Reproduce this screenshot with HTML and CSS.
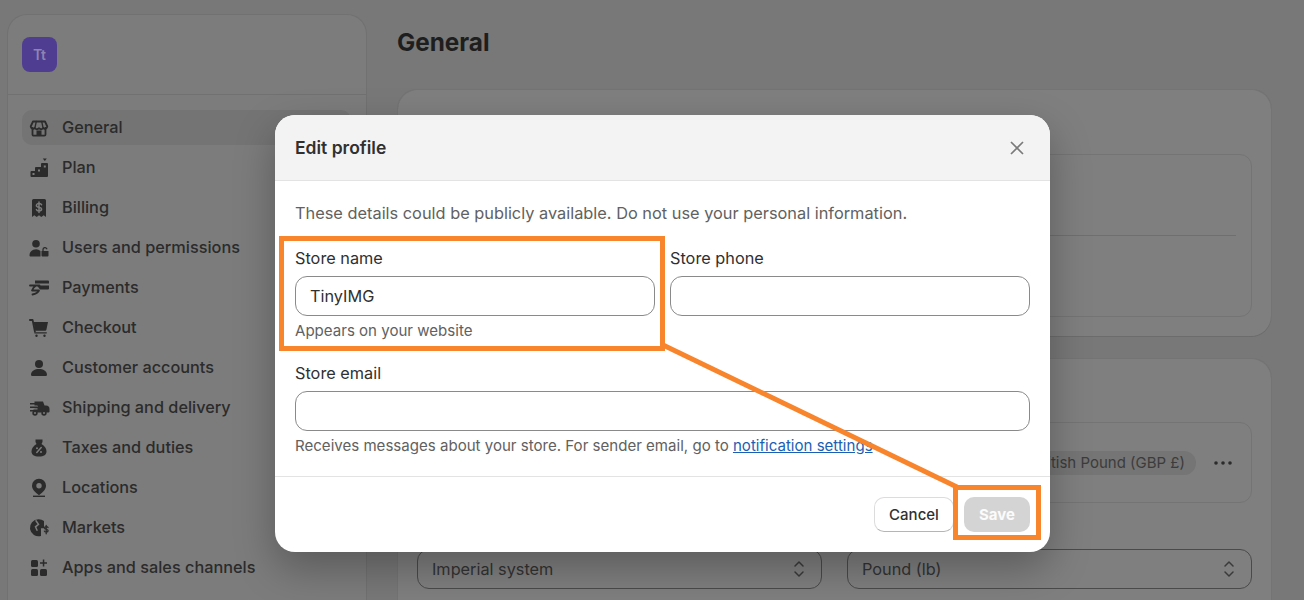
FILE: index.html
```html
<!DOCTYPE html>
<html lang="en">
<head>
<meta charset="utf-8">
<title>General</title>
<link rel="stylesheet" href="styles.css">
</head>
<body>
<div class="page">
  <aside class="sidebar">
    <div class="side-head"><div class="avatar">Tt</div></div>
    <nav class="nav">
      <a class="nav-item active"><svg class="ico" viewBox="0 0 20 20"><path class="ln" d="M3 4.500h12l2.300 5a2.400 2.400 0 0 1-4.100 1.500 3 3 0 0 1-4.200.3 3 3 0 0 1-4.200-.3A2.400 2.400 0 0 1 .7 9.500z"/><path class="ln" d="M2.500 11v6.500a1.200 1.200 0 0 0 1.200 1.200h10.600a1.200 1.200 0 0 0 1.200-1.200V11"/><path d="M6.500 13.500h5v5.200h-5z"/><path class="ln thin" d="M6.300 4.500 5 10.500M11.700 4.500l1.300 6"/></svg>General</a>
      <a class="nav-item"><svg class="ico" viewBox="0 0 20 20"><path d="M.5 15a1 1 0 0 1 1-1H5v-3a1 1 0 0 1 1-1h5V7a1 1 0 0 1 1-1h5a1 1 0 0 1 1 1v12a1 1 0 0 1-1 1H1.500a1 1 0 0 1-1-1z"/><path class="hole" d="M2.500 16h2v2h-2zM8 12.500h2v2H8zM13.800 8.500h2v2h-2z"/><path d="M12.800 1.500h4L14.800 4z"/></svg>Plan</a>
      <a class="nav-item"><svg class="ico" viewBox="0 0 20 20"><path d="M2 3.500A1.500 1.500 0 0 1 3.500 2h11A1.500 1.500 0 0 1 16 3.500V20l-2.300-1.800-2.400 1.800L9 18.200 6.700 20l-2.400-1.800L2 20z"/><path class="cut" d="M11.600 7.800C11.300 7 10.200 6.500 9 6.500c-1.400 0-2.600.7-2.600 1.900 0 2.600 5.200 1.200 5.200 3.700 0 1.200-1.200 1.900-2.600 1.900-1.200 0-2.300-.5-2.600-1.400M9 5v10.500"/></svg>Billing</a>
      <a class="nav-item"><svg class="ico" viewBox="0 0 20 20"><g transform="translate(-1 1.500)"><circle cx="7" cy="5.300" r="3.800"/><path d="M.5 17a6.500 6 0 0 1 11-4.500V18H1.500a1 1 0 0 1-1-1z"/><path d="M12.500 12.500h7V17a1 1 0 0 1-1 1h-5a1 1 0 0 1-1-1z"/><path class="ln thin" d="M14 12.500v-1.500a2 2 0 0 1 3.800-.8"/></g></svg>Users and permissions</a>
      <a class="nav-item"><svg class="ico" viewBox="0 0 20 20"><path d="M5 3.500h13a1 1 0 0 1 1 1v2H5zM7 8.500h12v3a1 1 0 0 1-1 1h-8z"/><path class="ln" d="M0 8.500h9.500M6 8.500C3.500 10 2.500 12 2 13.500h7C8 15.500 5 17 2.500 17.500"/></svg>Payments</a>
      <a class="nav-item"><svg class="ico" viewBox="0 0 20 20"><g transform="translate(-1 1)"><path class="ln" d="M.9 2h2.700l2.300 11.500"/><path d="M4.500 4h14.500l-1.600 7.800a1.300 1.300 0 0 1-1.300 1H6.300z"/><path class="ln thin" d="M5.800 14.800h11.500"/><circle cx="7.500" cy="17.800" r="1.200"/><circle cx="15.500" cy="17.800" r="1.200"/></g></svg>Checkout</a>
      <a class="nav-item"><svg class="ico" viewBox="0 0 20 20"><g transform="translate(-1 1.500)"><circle cx="10" cy="5.500" r="4"/><path d="M2 16.300C2 12.500 6 10.500 10 10.500s8 2 8 5.800a1.200 1.200 0 0 1-1.200 1.200H3.200A1.200 1.200 0 0 1 2 16.300z"/></g></svg>Customer accounts</a>
      <a class="nav-item"><svg class="ico" viewBox="0 0 20 20"><g transform="translate(-.5 1)"><path d="M5 3.500h8.500l1.500 4h1.500a3.500 3.500 0 0 1 3.500 3.500v2.500a1 1 0 0 1-1 1H4v-3h4v-1.300H5V9h3V7.500H5z"/><path d="M.5 5h7v1.500h-7zM.5 8.500h7V10h-7zM.5 12h7v1.500h-7z"/><circle cx="5.500" cy="15" r="2.700"/><circle cx="14.500" cy="15" r="2.700"/><circle class="hole" cx="5.500" cy="15" r="1"/><circle class="hole" cx="14.500" cy="15" r="1"/></g></svg>Shipping and delivery</a>
      <a class="nav-item"><svg class="ico" viewBox="0 0 20 20"><g transform="translate(-1 1.500)"><path d="M6.500 1h7v2.500l-1 2c3 1.500 5 4.500 5 7.500 0 3-2.500 5-7.500 5s-7.500-2-7.500-5c0-3 2-6 5-7.500l-1-2z"/><path class="cut" d="M7.800 14 12.200 9"/><circle class="hole" cx="8" cy="9.800" r="1"/><circle class="hole" cx="12" cy="13.500" r="1"/></g></svg>Taxes and duties</a>
      <a class="nav-item"><svg class="ico" viewBox="0 0 20 20"><g transform="translate(-1 .8)"><path fill-rule="evenodd" d="M10 1a7 7 0 0 1 7 7c0 3.500-3 6.500-7 9.500C6 14.500 3 11.500 3 8a7 7 0 0 1 7-7zm0 4.300a2.700 2.700 0 1 0 0 5.400 2.700 2.700 0 0 0 0-5.400z"/><path d="M4 17.800h12v1.400H4z"/></g></svg>Locations</a>
      <a class="nav-item"><svg class="ico" viewBox="0 0 20 20"><g transform="translate(-1 1.300)"><path d="M9.500 1a8.500 8.500 0 1 0 2.500 16.600V10H15V2.800A8.500 8.500 0 0 0 9.500 1z"/><path class="cut" d="M7 2.500 9.500 6 6.500 8.500 8 12"/><path class="ln thin" d="M19 9.300c-.3-.8-1-1-1.800-1-1 0-1.700.5-1.700 1.400 0 1.900 3.600.8 3.600 2.700 0 .9-.8 1.400-1.900 1.400-.8 0-1.600-.3-1.800-1M17.200 7v8.500"/></g></svg>Markets</a>
      <a class="nav-item"><svg class="ico" viewBox="0 0 20 20"><g transform="translate(-1 1)"><rect x="2" y="2" width="7" height="7" rx="1.500"/><rect x="2" y="11" width="7" height="7" rx="1.500"/><rect x="11" y="11" width="7" height="7" rx="1.500"/><path d="M13.800 1.500h1.500v2.700H18v1.500h-2.700v2.700h-1.500V5.700H11V4.200h2.800z"/></g></svg>Apps and sales channels</a>
    </nav>
  </aside>

  <main class="main">
    <h1 class="title">General</h1>
    <section class="card">
      <div class="box tall"><div class="rule"></div></div>
    </section>
    <section class="card second">
      <div class="box row">
        <span class="pill">British Pound (GBP £)</span>
        <svg class="dots" viewBox="0 0 18 4"><circle cx="2" cy="2" r="1.800"/><circle cx="9" cy="2" r="1.800"/><circle cx="16" cy="2" r="1.800"/></svg>
      </div>
      <div class="selects">
        <div class="select">Imperial system<svg class="updown" viewBox="0 0 12 20"><path d="M2 7l4-4 4 4M2 13l4 4 4-4"/></svg></div>
        <div class="select">Pound (lb)<svg class="updown" viewBox="0 0 12 20"><path d="M2 7l4-4 4 4M2 13l4 4 4-4"/></svg></div>
      </div>
    </section>
  </main>
</div>

<div class="modal">
  <header class="modal-head">
    <h2 class="modal-title">Edit profile</h2>
    <svg class="close" viewBox="0 0 16 16"><path d="M2 2l12 12M14 2 2 14"/></svg>
  </header>
  <div class="modal-body">
    <p class="intro">These details could be publicly available. Do not use your personal information.</p>
    <div class="fields">
      <div class="field">
        <label class="label">Store name</label>
        <div class="input">TinyIMG</div>
        <p class="help">Appears on your website</p>
      </div>
      <div class="field">
        <label class="label">Store phone</label>
        <div class="input"></div>
      </div>
      <div class="field wide">
        <label class="label">Store email</label>
        <div class="input"></div>
        <p class="help">Receives messages about your store. For sender email, go to <a class="link">notification settings</a></p>
      </div>
    </div>
  </div>
  <footer class="modal-foot">
    <button class="btn">Cancel</button>
    <button class="btn save">Save</button>
  </footer>
</div>

<svg class="annot" viewBox="0 0 1304 600">
  <rect x="281.500" y="238.500" width="381" height="110"/>
  <rect x="955.500" y="487.500" width="83" height="50"/>
  <path d="M663 345 957 487"/>
</svg>
</body>
</html>
```

FILE: styles.css
```css
* { box-sizing: border-box; }
html, body { margin: 0; height: 600px; overflow: hidden; }
body {
  background: #787878;
  font-family: Inter, "Liberation Sans", sans-serif;
  font-size: 16.300px;
  color: #2b2b2b;
  position: relative;
}
.page { display: flex; height: 600px; padding: 14px 0 0 7px; }

.sidebar {
  width: 360px;
  flex: none;
  height: 586px;
  background: #7c7c7c;
  border: 1px solid #717171;
  border-bottom: 0;
  border-radius: 20px 20px 0 0;
}
.side-head { height: 80px; padding: 22px 14px; border-bottom: 1px solid #717171; }
.avatar {
  width: 35px; height: 35px;
  border-radius: 8px;
  background: #4f3d92;
  color: #8d84b0;
  font-size: 14px;
  font-weight: 600;
  display: flex; align-items: center; justify-content: center;
}
.nav { padding: 15px 15px 0 14px; display: flex; flex-direction: column; gap: 5px; }
.nav-item {
  height: 35px;
  display: flex; align-items: center;
  padding: 0 0 1px 8px;
  gap: 12px;
  line-height: 20px;
  border-radius: 10px;
  font-weight: 500;
  white-space: nowrap;
}
.nav-item.active { background: #747474; }
.ico { width: 20px; height: 20px; flex: none; fill: #2b2b2b; overflow: visible; }
.ln { fill: none; stroke: #2b2b2b; stroke-width: 1.800; stroke-linejoin: round; stroke-linecap: round; }
.ln.thin { stroke-width: 1.300; }
.cut { fill: none; stroke: #7c7c7c; stroke-width: 1.500; stroke-linecap: round; }
.hole { fill: #7c7c7c; }

.main { flex: 1; padding-left: 31px; padding-right: 33px; }
.title { margin: 0 0 0 -1px; height: 56px; padding-top: 12px; font-size: 24.300px; line-height: 32px; font-weight: 700; color: #1e1e1e; }
.card {
  margin-top: 19px;
  background: #7f7f7f;
  border-radius: 20px;
  border-top: 1px solid #747474;
  box-shadow: 0 1px 0 #6c6c6c, 1px 0 0 #747474, -1px 0 0 #747474;
  padding: 64px 19px 19px;
}
.card.second { margin-top: 22px; height: 242px; padding: 63px 19px 0; border-radius: 20px 20px 0 0; }
.box { border: 1px solid #747474; border-radius: 12px; }
.box.tall { height: 163px; padding-top: 80px; }
.rule { height: 1px; background: #6f6f6f; margin-right: 15px; }
.box.row { height: 81px; display: flex; align-items: center; justify-content: flex-end; padding-right: 19px; }
.pill {
  height: 24px; line-height: 24px;
  padding: 0 11px;
  border-radius: 12px;
  background: #757575;
  font-size: 15px;
  color: #3c3c3c;
  margin-right: 18px;
}
.dots { width: 18px; height: 4px; fill: #2b2b2b; }
.selects { margin-top: 46px; display: flex; gap: 25px; }
.select {
  width: 405px; height: 40px;
  border: 1px solid #4a4a4a;
  border-radius: 12px;
  padding: 0 14px;
  display: flex; align-items: center; justify-content: space-between;
  color: #333;
}
.updown { width: 12px; height: 20px; fill: none; stroke: #3a3a3a; stroke-width: 1.500; stroke-linecap: round; stroke-linejoin: round; margin-right: 2px; }

.modal {
  position: absolute;
  left: 275px; top: 115px;
  width: 775px; height: 437px;
  background: #fff;
  border-radius: 20px;
  overflow: hidden;
  box-shadow: 0 16px 40px rgba(0, 0, 0, .28);
  color: #303030;
}
.modal-head {
  height: 66px;
  background: #f3f3f3;
  border-bottom: 1px solid #e3e3e3;
  padding: 0 25px 0 20px;
  display: flex; align-items: center; justify-content: space-between;
}
.modal-title { margin: 0; font-size: 17.500px; font-weight: 600; }
.close { width: 16px; height: 16px; fill: none; stroke: #7a7a7a; stroke-width: 1.700; }
.modal-body { height: 296px; padding: 22px 20px 0; border-bottom: 1px solid #e3e3e3; }
.intro { margin: 0; font-size: 16.350px; line-height: 20px; color: #616161; }
.fields { margin-top: 25px; display: grid; grid-template-columns: 360px 360px; column-gap: 15px; row-gap: 22px; }
.field.wide { grid-column: 1 / span 2; }
.label { display: block; line-height: 20px; margin-bottom: 8px; }
.input {
  height: 40px;
  border: 1px solid #8a8a8a;
  border-radius: 12px;
  padding: 0 14px;
  display: flex; align-items: center;
}
.help { margin: 5px 0 0; line-height: 20px; font-size: 15.070px; color: #616161; }
.link { color: #1b5fb5; text-decoration: underline; }
.modal-foot { padding: 20px; display: flex; justify-content: flex-end; gap: 10px; }
.btn {
  height: 35px; width: 80px;
  font: 500 15px Inter, "Liberation Sans", sans-serif;
  color: #303030;
  background: #fff;
  border: 1px solid #dcdcdc;
  border-bottom-color: #b5b5b5;
  border-radius: 10px;
}
.btn.save { width: 66px; background: #d4d4d4; color: #fbfbfb; border: 0; font-weight: 700; }

.annot { position: absolute; left: 0; top: 0; width: 1304px; height: 600px; pointer-events: none; fill: none; stroke: #f8842c; stroke-width: 5; }
```
